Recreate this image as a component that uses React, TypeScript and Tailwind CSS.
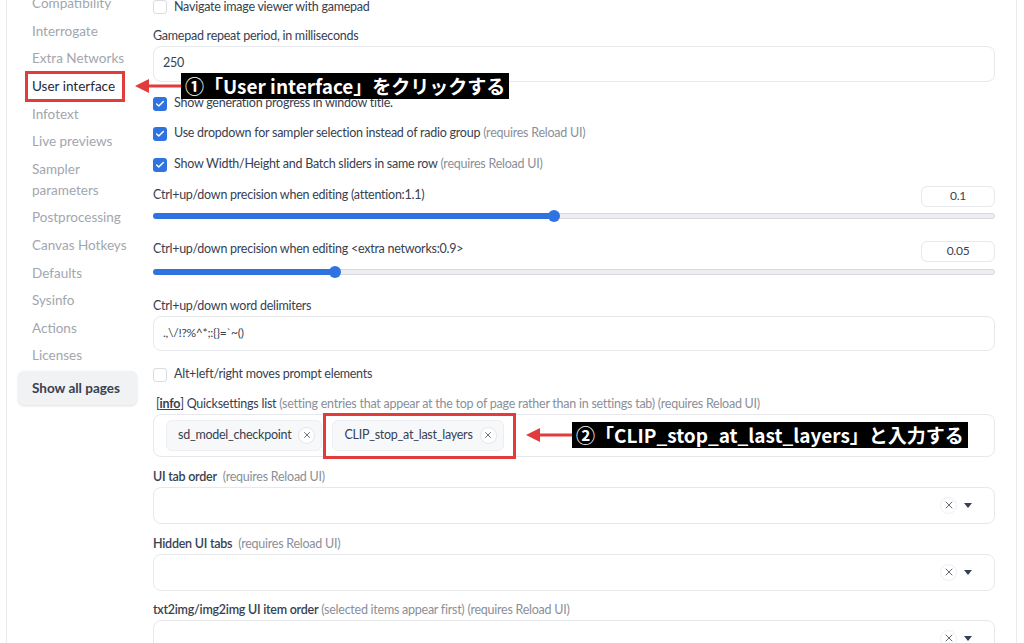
import { Check, X } from "lucide-react";

const navItems = [
  "Compatibility",
  "Interrogate",
  "Extra Networks",
  "User interface",
  "Infotext",
  "Live previews",
  "Sampler parameters",
  "Postprocessing",
  "Canvas Hotkeys",
  "Defaults",
  "Sysinfo",
  "Actions",
  "Licenses",
];

const font = { fontFamily: "Lato, 'Noto Sans', sans-serif" };

function Box({ checked, label, note }: { checked: boolean; label: string; note?: string }) {
  return (
    <div className="flex h-[20px] items-center gap-[7px]">
      {checked ? (
        <span className="grid h-[14px] w-[14px] place-items-center rounded-[3px] bg-[#2f73e0]">
          <Check size={10} strokeWidth={3.5} className="text-white" />
        </span>
      ) : (
        <span className="h-[14px] w-[14px] rounded-[3px] border border-[#d9dce1] bg-white" />
      )}
      <span className="text-[#374151]">
        {label}
        {note && <span className="text-[#8a8f98]"> {note}</span>}
      </span>
    </div>
  );
}

function Label({ name, note }: { name: React.ReactNode; note?: string }) {
  return (
    <div className="h-[20px] whitespace-pre leading-[20px] text-[#374151]">
      {name}
      {note && <span className="text-[#8a8f98]">{note}</span>}
    </div>
  );
}

function Slider({ pct }: { pct: number }) {
  return (
    <div className="relative flex h-[12px] items-center">
      <div className="h-[6px] w-full rounded-full border border-[#d6d8dc] bg-[#eceef1]" />
      <div className="absolute left-0 h-[6px] rounded-full bg-[#2f73e0]" style={{ width: `${pct}%` }} />
      <div
        className="absolute h-[12px] w-[12px] -translate-x-1/2 rounded-full bg-[#2f73e0]"
        style={{ left: `${pct}%` }}
      />
    </div>
  );
}

function NumBox({ value }: { value: string }) {
  return (
    <div className="flex h-[21px] w-[74px] items-center justify-center rounded-md border border-[#e6e8eb] text-[12px] text-[#374151]">
      {value}
    </div>
  );
}

function Dropdown() {
  return (
    <div className="flex h-[37px] items-center justify-end gap-[7px] rounded-lg border border-[#e6e8eb] pr-[22px]">
      <span className="grid h-[17px] w-[17px] place-items-center rounded-full border border-[#eceef1]">
        <X size={12} strokeWidth={1.6} className="text-[#374151]" />
      </span>
      <svg width="8" height="5" viewBox="0 0 8 5">
        <path d="M0 0h8L4 5z" fill="#374151" />
      </svg>
    </div>
  );
}

function Chip({ text }: { text: string }) {
  return (
    <div className="flex h-[31px] items-center gap-[7px] rounded-md border border-[#eceef1] bg-[#f7f8f9] pl-[11px] pr-[6px] text-[#374151]">
      {text}
      <span className="grid h-[17px] w-[17px] place-items-center rounded-full border border-[#e3e5e8] bg-white">
        <X size={10} strokeWidth={2} className="text-[#4b5563]" />
      </span>
    </div>
  );
}

function Arrow() {
  return (
    <svg width="46" height="16" viewBox="0 0 46 16">
      <path d="M0 8L14 1v14z" fill="#e23b3b" />
      <rect x="12" y="6.5" width="34" height="3" fill="#e23b3b" />
    </svg>
  );
}

export default function App() {
  return (
    <div className="relative h-[643px] w-[1024px] overflow-hidden bg-white" style={font}>
      <div className="ml-[6px] mr-[7px] flex h-full border-x border-[#e9ebee]">
        <aside className="mt-[-10px] w-[139px] shrink-0">
          {navItems.map((n) => (
            <div
              key={n}
              className={`py-[3.3px] pl-[25px] pr-[8px] text-[13.5px] leading-[21px] ${
                n === "User interface" ? "text-[#1f2937]" : "text-[#a2a6ad]"
              }`}
            >
              {n}
            </div>
          ))}
          <div className="ml-[11px] mt-[1px] flex h-[34px] w-[119px] items-center rounded-md bg-[#f1f2f4] pl-[14px] text-[13.5px] font-bold text-[#374151] shadow-sm">
            Show all pages
          </div>
        </aside>

        <main className="mr-[21px] mt-[-2px] flex flex-1 flex-col pl-[7px] text-[12.5px] tracking-[-0.02em]">
          <Box checked={false} label="Navigate image viewer with gamepad" />
          <div className="mt-[9px]">
            <Label name="Gamepad repeat period, in milliseconds" />
            <div className="flex h-[36px] items-center rounded-lg border border-[#e6e8eb] pl-[9px] text-[#374151]">
              250
            </div>
          </div>
          <div className="mt-[12px]">
            <Box checked label="Show generation progress in window title." />
          </div>
          <div className="mt-[10px]">
            <Box
              checked
              label="Use dropdown for sampler selection instead of radio group"
              note="(requires Reload UI)"
            />
          </div>
          <div className="mt-[11px]">
            <Box checked label="Show Width/Height and Batch sliders in same row" note="(requires Reload UI)" />
          </div>

          <div className="mt-[10px] flex items-start justify-between">
            <Label name="Ctrl+up/down precision when editing (attention:1.1)" />
            <div className="mt-[1px]">
              <NumBox value="0.1" />
            </div>
          </div>
          <div className="mt-[3px]">
            <Slider pct={47.6} />
          </div>

          <div className="mt-[17px] flex items-start justify-between">
            <Label name="Ctrl+up/down precision when editing <extra networks:0.9>" />
            <div className="mt-[2px]">
              <NumBox value="0.05" />
            </div>
          </div>
          <div className="mt-[4px]">
            <Slider pct={21.6} />
          </div>

          <div className="mt-[18px]">
            <Label name="Ctrl+up/down word delimiters" />
            <div className="flex h-[35px] items-center rounded-lg border border-[#e6e8eb] pl-[9px] text-[12px] text-[#374151]">
              {".,\\/!?%^*;:{}=`~()"}
            </div>
          </div>

          <div className="mt-[14px]">
            <Box checked={false} label="Alt+left/right moves prompt elements" />
          </div>

          <div className="mt-[9px]">
            <Label
              name={
                <>
                  <span className="pl-[3px]">[</span>
                  <span className="font-bold underline">info</span>] Quicksettings list
                </>
              }
              note=" (setting entries that appear at the top of page rather than in settings tab) (requires Reload UI)"
            />
            <div className="flex h-[43px] items-center gap-[10px] rounded-lg border border-[#e6e8eb] pl-[12px]">
              <Chip text="sd_model_checkpoint" />
              <Chip text="CLIP_stop_at_last_layers" />
            </div>
          </div>

          <div className="mt-[10px]">
            <Label name={<span className="font-semibold">UI tab order</span>} note="  (requires Reload UI)" />
            <Dropdown />
          </div>
          <div className="mt-[10px]">
            <Label name={<span className="font-semibold">Hidden UI tabs</span>} note="  (requires Reload UI)" />
            <Dropdown />
          </div>
          <div className="mt-[9px]">
            <Label
              name={<span className="font-semibold">txt2img/img2img UI item order</span>}
              note=" (selected items appear first) (requires Reload UI)"
            />
            <Dropdown />
          </div>
        </main>
      </div>

      {/* annotation 1 */}
      <div className="absolute left-[25px] top-[71px] h-[31px] w-[100px] border-[3px] border-[#e23b3b]" />
      <div className="absolute left-[135px] top-[73px] flex items-center">
        <Arrow />
        <div
          className="flex h-[26px] items-center bg-black px-[4px] text-[19px] font-bold text-white"
          style={{ fontFamily: "'Noto Sans CJK JP', sans-serif" }}
        >
          ①「User interface」をクリックする
        </div>
      </div>

      {/* annotation 2 */}
      <div className="absolute left-[323px] top-[413px] h-[46px] w-[193px] border-[3px] border-[#e23b3b]" />
      <div className="absolute left-[526px] top-[422px] flex items-center">
        <Arrow />
        <div
          className="flex h-[26px] items-center bg-black px-[4px] text-[19px] font-bold text-white"
          style={{ fontFamily: "'Noto Sans CJK JP', sans-serif" }}
        >
          ②「CLIP_stop_at_last_layers」と入力する
        </div>
      </div>
    </div>
  );
}
